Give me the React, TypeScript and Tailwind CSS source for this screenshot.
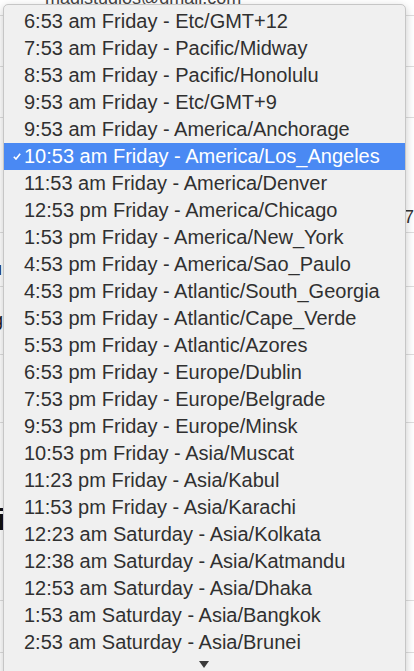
import React from 'react';

const zones = [
  { time: '6:53 am Friday', zone: 'Etc/GMT+12' },
  { time: '7:53 am Friday', zone: 'Pacific/Midway' },
  { time: '8:53 am Friday', zone: 'Pacific/Honolulu' },
  { time: '9:53 am Friday', zone: 'Etc/GMT+9' },
  { time: '9:53 am Friday', zone: 'America/Anchorage' },
  { time: '10:53 am Friday', zone: 'America/Los_Angeles' },
  { time: '11:53 am Friday', zone: 'America/Denver' },
  { time: '12:53 pm Friday', zone: 'America/Chicago' },
  { time: '1:53 pm Friday', zone: 'America/New_York' },
  { time: '4:53 pm Friday', zone: 'America/Sao_Paulo' },
  { time: '4:53 pm Friday', zone: 'Atlantic/South_Georgia' },
  { time: '5:53 pm Friday', zone: 'Atlantic/Cape_Verde' },
  { time: '5:53 pm Friday', zone: 'Atlantic/Azores' },
  { time: '6:53 pm Friday', zone: 'Europe/Dublin' },
  { time: '7:53 pm Friday', zone: 'Europe/Belgrade' },
  { time: '9:53 pm Friday', zone: 'Europe/Minsk' },
  { time: '10:53 pm Friday', zone: 'Asia/Muscat' },
  { time: '11:23 pm Friday', zone: 'Asia/Kabul' },
  { time: '11:53 pm Friday', zone: 'Asia/Karachi' },
  { time: '12:23 am Saturday', zone: 'Asia/Kolkata' },
  { time: '12:38 am Saturday', zone: 'Asia/Katmandu' },
  { time: '12:53 am Saturday', zone: 'Asia/Dhaka' },
  { time: '1:53 am Saturday', zone: 'Asia/Bangkok' },
  { time: '2:53 am Saturday', zone: 'Asia/Brunei' },
];

const selected = 'America/Los_Angeles';

function Background() {
  return (
    <div className="flex flex-col bg-white text-[#333]">
      <div className="h-[16px] border-b border-[#dedede] overflow-hidden">
        <p className="-mt-[13px] pl-[45px] text-[18px] leading-[22px] text-[#444]">madistudios@gmail.com</p>
      </div>
      <div className="h-[51px] border-b border-[#dedede]" />
      <div className="h-[51px] border-b border-[#dedede]" />
      <div className="h-[115px] border-b border-[#dedede] flex items-end justify-between pb-[1px]">
        <span className="-ml-[8px] text-[18px] text-[#d9822b]">f</span>
        <span className="mr-[-10px] text-[18px] text-[#333]">77</span>
      </div>
      <div className="h-[54px] border-b border-[#dedede] flex items-center pt-[20px]">
        <span className="-ml-[3px] text-[18px] font-bold text-[#222]">ı</span>
      </div>
      <div className="h-[68px] border-b border-[#dedede] flex items-center">
        <span className="-ml-[7px] text-[18px] text-[#222]">g</span>
      </div>
      <div className="h-[68px] border-b border-[#dedede]" />
      <div className="h-[178px] border-b border-[#dedede] flex items-center pt-[16px]">
        <span className="-ml-[3px] text-[30px] font-bold text-[#111]">i</span>
      </div>
      <div className="h-[52px] border-b border-[#dedede]" />
      <div className="h-[60px]" />
    </div>
  );
}

function Check() {
  return (
    <svg width="8" height="7" viewBox="0 0 8 7" className="shrink-0">
      <path d="M0.8 3.8 L3 6 L7.2 0.8" fill="none" stroke="white" strokeWidth="1.6" />
    </svg>
  );
}

function Menu() {
  return (
    <div className="absolute left-[3px] top-[4px] w-[403px] h-[700px] rounded-[5px] bg-[#f0f0f0] border border-[#c6c6c6] shadow-[0_3px_10px_rgba(0,0,0,0.22)] pt-[3px] overflow-hidden">
      {zones.map((z) => {
        const on = z.zone === selected;
        return (
          <div
            key={z.zone}
            className={`h-[27px] flex items-center text-[20px] leading-[27px] whitespace-nowrap ${
              on ? 'bg-[#4a89f3] text-white' : 'text-[#303030]'
            }`}
          >
            <div className="w-[20px] flex justify-end pr-[3px]">{on && <Check />}</div>
            <span>
              {z.time} - {z.zone}
            </span>
          </div>
        );
      })}
      <div className="flex justify-center pt-[5px] pr-[2px]">
        <svg width="10" height="7" viewBox="0 0 10 7">
          <path d="M0 0 H10 L5 7 Z" fill="#3a3a3a" />
        </svg>
      </div>
    </div>
  );
}

export default function App() {
  return (
    <div
      className="relative w-[414px] h-[671px] overflow-hidden bg-white"
      style={{ fontFamily: '"Liberation Sans", Arial, sans-serif' }}
    >
      <Background />
      <Menu />
    </div>
  );
}
